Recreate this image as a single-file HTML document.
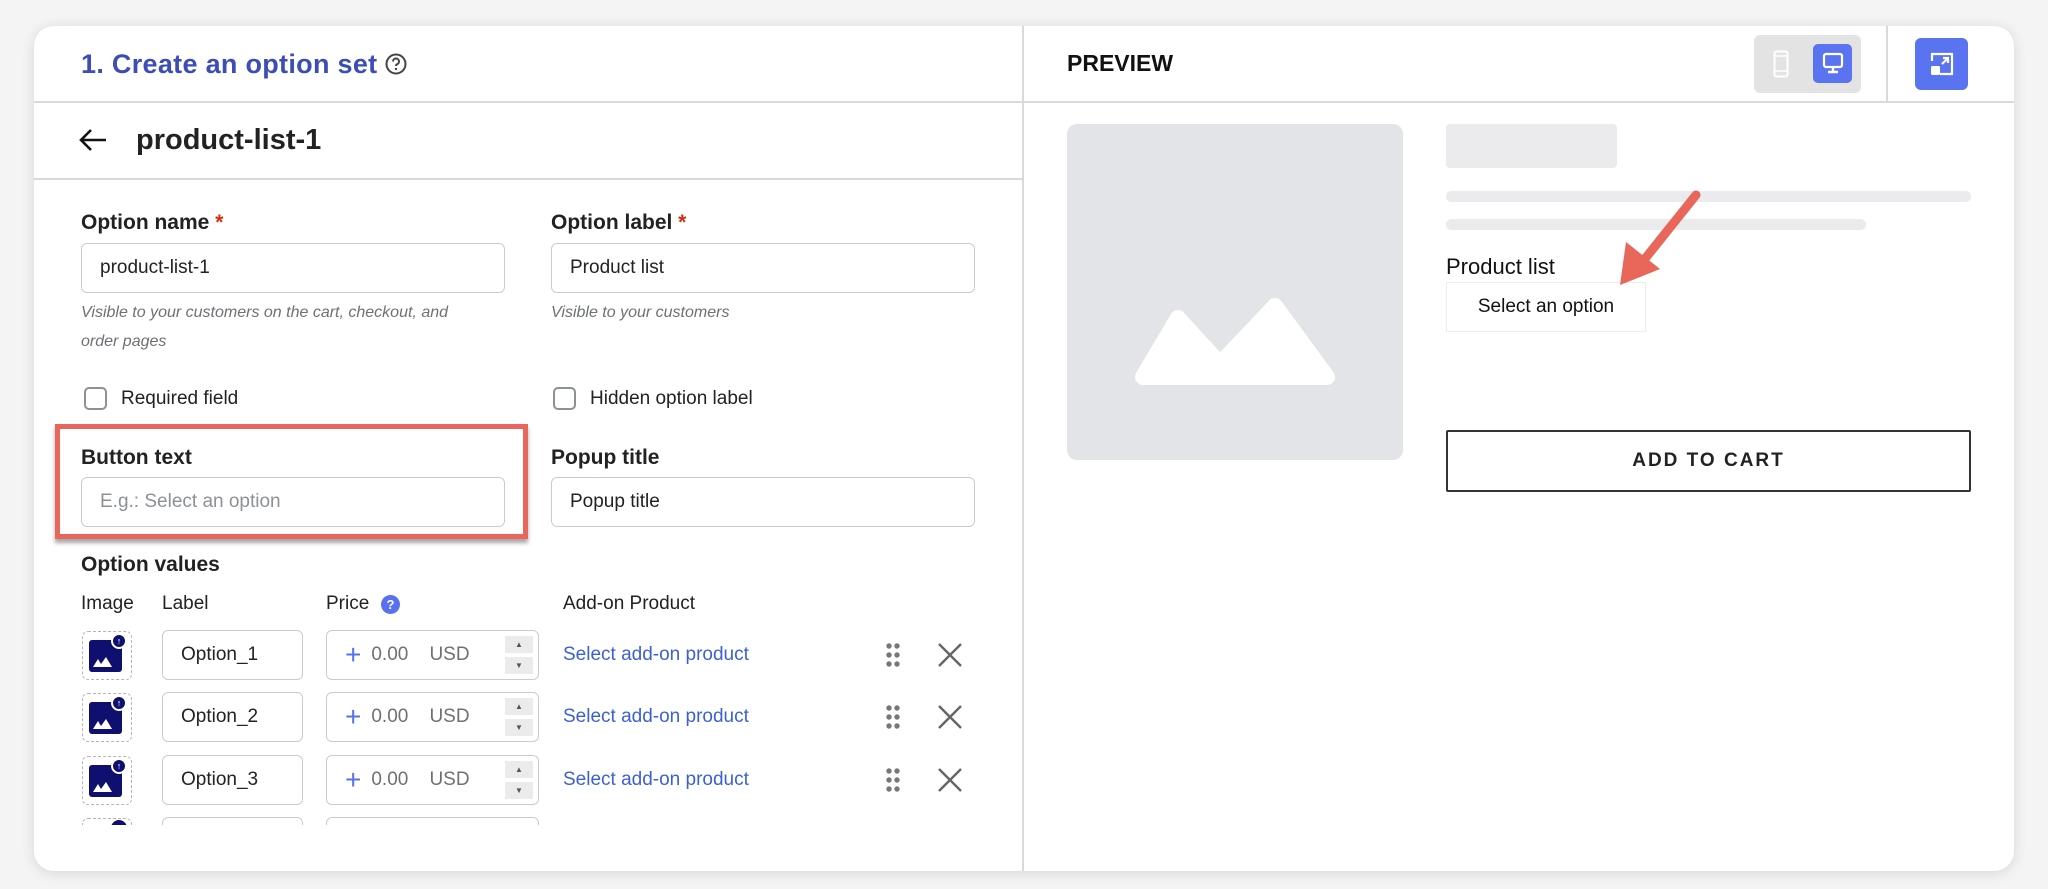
<!DOCTYPE html>
<html><head><meta charset="utf-8"><style>
*{box-sizing:border-box;margin:0;padding:0}
body{width:2048px;height:889px;background:#f4f4f5;font-family:"Liberation Sans",sans-serif;color:#202223;position:relative;overflow:hidden}
.a{position:absolute}
.card{left:34px;top:26px;width:1980px;height:845px;background:#fff;border-radius:20px;box-shadow:0 2px 14px rgba(0,0,0,.12);overflow:hidden}
.lbl{font-size:21px;font-weight:bold;color:#202223}
.inp{border:1.5px solid #c9cccf;border-radius:6px;background:#fff;font-size:19px;color:#202223;padding-left:18px;display:flex;align-items:center}
.help{font-size:16px;font-style:italic;color:#6d7175}
.cb{width:23px;height:23px;border:2px solid #8c9196;border-radius:5px}
.link{color:#3c5fd6;font-size:19px}
.star{color:#d72c0d}
</style></head><body>
<div class="a card"></div>
<div class="a" style="left:34px;top:101px;width:1980px;height:2px;background:#d9d9d9"></div>
<div class="a" style="left:34px;top:178px;width:989px;height:2px;background:#d9d9d9"></div>
<div class="a" style="left:1022px;top:26px;width:2px;height:845px;background:#d9d9d9"></div>
<div class="a" style="left:81px;top:49px;font-size:27px;font-weight:bold;color:#3d4db7;letter-spacing:0.3px">1. Create an option set</div>
<svg class="a" style="left:384px;top:52px" width="24" height="24" viewBox="0 0 24 24"><circle cx="12" cy="12" r="9.5" fill="none" stroke="#444" stroke-width="2"/><path d="M9 9.5a3 3 0 1 1 4 2.8c-.8.4-1 .9-1 1.7" fill="none" stroke="#444" stroke-width="2"/><circle cx="12" cy="17" r="1.2" fill="#444"/></svg>
<svg class="a" style="left:78px;top:127px" width="30" height="26" viewBox="0 0 30 26"><path d="M28 13H3M13 3L3 13l10 10" fill="none" stroke="#111" stroke-width="2.6"/></svg>
<div class="a" style="left:136px;top:124px;font-size:29px;font-weight:bold;color:#202223">product-list-1</div>

<div class="a lbl" style="left:81px;top:211px">Option name <span class="star">*</span></div>
<div class="a inp" style="left:81px;top:243px;width:424px;height:50px">product-list-1</div>
<div class="a help" style="left:81px;top:304px">Visible to your customers on the cart, checkout, and</div>
<div class="a help" style="left:81px;top:333px">order pages</div>
<div class="a lbl" style="left:551px;top:211px">Option label <span class="star">*</span></div>
<div class="a inp" style="left:551px;top:243px;width:424px;height:50px">Product list</div>
<div class="a help" style="left:551px;top:304px">Visible to your customers</div>

<div class="a cb" style="left:84px;top:387px"></div>
<div class="a" style="left:121px;top:388px;font-size:19px">Required field</div>
<div class="a cb" style="left:553px;top:387px"></div>
<div class="a" style="left:590px;top:388px;font-size:19px">Hidden option label</div>

<div class="a" style="left:55px;top:424px;width:473px;height:115px;border:5px solid #e8665a;box-shadow:0 4px 4px rgba(0,0,0,.35)"></div>
<div class="a lbl" style="left:81px;top:446px">Button text</div>
<div class="a inp" style="left:81px;top:477px;width:424px;height:50px;color:#8c9196">E.g.: Select an option</div>
<div class="a lbl" style="left:551px;top:446px">Popup title</div>
<div class="a inp" style="left:551px;top:477px;width:424px;height:50px">Popup title</div>

<div class="a lbl" style="left:81px;top:553px">Option values</div>
<div class="a" style="left:81px;top:593px;font-size:19px">Image</div>
<div class="a" style="left:162px;top:593px;font-size:19px">Label</div>
<div class="a" style="left:326px;top:593px;font-size:19px">Price</div>
<div class="a" style="left:381px;top:595px;width:19px;height:19px;border-radius:50%;background:#5871ee;color:#fff;font-size:13px;text-align:center;line-height:19px;font-weight:bold">?</div>
<div class="a" style="left:563px;top:593px;font-size:19px">Add-on Product</div>

<div class="a" style="left:34px;top:620px;width:989px;height:205px;overflow:hidden">
 <div class="a" style="left:48px;top:11px;width:50px;height:49px;border:1.5px dashed #b5b5b5;border-radius:6px"></div>
 <div class="a" style="left:55px;top:20px;width:33px;height:32px;background:#0f0f70;border-radius:3px"></div>
 <svg class="a" style="left:57px;top:36px" width="28" height="12" viewBox="0 0 28 12"><path d="M2 11l5-8 3 5 5-7 6 10z" fill="#fff"/></svg>
 <div class="a" style="left:77px;top:13px;width:16px;height:16px;border-radius:50%;background:#0f0f70;border:2px solid #fff;color:#fff;font-size:9px;text-align:center;line-height:12px">↑</div>
 <div class="a inp" style="left:128px;top:10px;width:141px;height:50px">Option_1</div>
 <div class="a inp" style="left:292px;top:10px;width:213px;height:50px;color:#6d7175"><span style="color:#5871ee;font-size:28px;margin-right:10px">+</span>0.00&nbsp;&nbsp;&nbsp;&nbsp;USD</div>
 <div class="a" style="left:471px;top:16px;width:28px;height:17px;background:#ebebeb;font-size:8px;text-align:center;line-height:17px;color:#555">▲</div>
 <div class="a" style="left:471px;top:37px;width:28px;height:17px;background:#ebebeb;font-size:8px;text-align:center;line-height:17px;color:#555">▼</div>
 <div class="a link" style="left:529px;top:24px">Select add-on product</div>
 <svg class="a" style="left:851px;top:22px" width="16" height="26"><g fill="#777"><circle cx="4" cy="4" r="2.7"/><circle cx="12" cy="4" r="2.7"/><circle cx="4" cy="13" r="2.7"/><circle cx="12" cy="13" r="2.7"/><circle cx="4" cy="22" r="2.7"/><circle cx="12" cy="22" r="2.7"/></g></svg>
 <svg class="a" style="left:903px;top:22px" width="26" height="26"><path d="M2 2l22 22M24 2L2 24" stroke="#666" stroke-width="2.4"/></svg>

 <div class="a" style="left:48px;top:73px;width:50px;height:49px;border:1.5px dashed #b5b5b5;border-radius:6px"></div>
 <div class="a" style="left:55px;top:82px;width:33px;height:32px;background:#0f0f70;border-radius:3px"></div>
 <svg class="a" style="left:57px;top:98px" width="28" height="12" viewBox="0 0 28 12"><path d="M2 11l5-8 3 5 5-7 6 10z" fill="#fff"/></svg>
 <div class="a" style="left:77px;top:75px;width:16px;height:16px;border-radius:50%;background:#0f0f70;border:2px solid #fff;color:#fff;font-size:9px;text-align:center;line-height:12px">↑</div>
 <div class="a inp" style="left:128px;top:72px;width:141px;height:50px">Option_2</div>
 <div class="a inp" style="left:292px;top:72px;width:213px;height:50px;color:#6d7175"><span style="color:#5871ee;font-size:28px;margin-right:10px">+</span>0.00&nbsp;&nbsp;&nbsp;&nbsp;USD</div>
 <div class="a" style="left:471px;top:78px;width:28px;height:17px;background:#ebebeb;font-size:8px;text-align:center;line-height:17px;color:#555">▲</div>
 <div class="a" style="left:471px;top:99px;width:28px;height:17px;background:#ebebeb;font-size:8px;text-align:center;line-height:17px;color:#555">▼</div>
 <div class="a link" style="left:529px;top:86px">Select add-on product</div>
 <svg class="a" style="left:851px;top:84px" width="16" height="26"><g fill="#777"><circle cx="4" cy="4" r="2.7"/><circle cx="12" cy="4" r="2.7"/><circle cx="4" cy="13" r="2.7"/><circle cx="12" cy="13" r="2.7"/><circle cx="4" cy="22" r="2.7"/><circle cx="12" cy="22" r="2.7"/></g></svg>
 <svg class="a" style="left:903px;top:84px" width="26" height="26"><path d="M2 2l22 22M24 2L2 24" stroke="#666" stroke-width="2.4"/></svg>

 <div class="a" style="left:48px;top:136px;width:50px;height:49px;border:1.5px dashed #b5b5b5;border-radius:6px"></div>
 <div class="a" style="left:55px;top:145px;width:33px;height:32px;background:#0f0f70;border-radius:3px"></div>
 <svg class="a" style="left:57px;top:161px" width="28" height="12" viewBox="0 0 28 12"><path d="M2 11l5-8 3 5 5-7 6 10z" fill="#fff"/></svg>
 <div class="a" style="left:77px;top:138px;width:16px;height:16px;border-radius:50%;background:#0f0f70;border:2px solid #fff;color:#fff;font-size:9px;text-align:center;line-height:12px">↑</div>
 <div class="a inp" style="left:128px;top:135px;width:141px;height:50px">Option_3</div>
 <div class="a inp" style="left:292px;top:135px;width:213px;height:50px;color:#6d7175"><span style="color:#5871ee;font-size:28px;margin-right:10px">+</span>0.00&nbsp;&nbsp;&nbsp;&nbsp;USD</div>
 <div class="a" style="left:471px;top:141px;width:28px;height:17px;background:#ebebeb;font-size:8px;text-align:center;line-height:17px;color:#555">▲</div>
 <div class="a" style="left:471px;top:162px;width:28px;height:17px;background:#ebebeb;font-size:8px;text-align:center;line-height:17px;color:#555">▼</div>
 <div class="a link" style="left:529px;top:149px">Select add-on product</div>
 <svg class="a" style="left:851px;top:147px" width="16" height="26"><g fill="#777"><circle cx="4" cy="4" r="2.7"/><circle cx="12" cy="4" r="2.7"/><circle cx="4" cy="13" r="2.7"/><circle cx="12" cy="13" r="2.7"/><circle cx="4" cy="22" r="2.7"/><circle cx="12" cy="22" r="2.7"/></g></svg>
 <svg class="a" style="left:903px;top:147px" width="26" height="26"><path d="M2 2l22 22M24 2L2 24" stroke="#666" stroke-width="2.4"/></svg>

 <div class="a" style="left:48px;top:198px;width:50px;height:49px;border:1.5px dashed #b5b5b5;border-radius:6px"></div>
 <div class="a" style="left:77px;top:200px;width:16px;height:16px;border-radius:50%;background:#0f0f70"></div>
 <div class="a inp" style="left:128px;top:197px;width:141px;height:50px"></div>
 <div class="a inp" style="left:292px;top:197px;width:213px;height:50px"></div>
</div>

<div class="a" style="left:1067px;top:50px;font-size:23px;font-weight:bold;color:#111">PREVIEW</div>
<div class="a" style="left:1754px;top:35px;width:107px;height:58px;background:#e3e3e3;border-radius:6px"></div>
<svg class="a" style="left:1773px;top:50px" width="16" height="28"><rect x="1.5" y="1.5" width="13" height="25" rx="2" fill="none" stroke="#fff" stroke-width="2"/><line x1="1.5" y1="6" x2="14.5" y2="6" stroke="#fff" stroke-width="1.5"/><line x1="1.5" y1="21" x2="14.5" y2="21" stroke="#fff" stroke-width="1.5"/></svg>
<div class="a" style="left:1813px;top:44px;width:39px;height:39px;background:#5a73f0;border-radius:5px"></div>
<svg class="a" style="left:1821px;top:51px" width="24" height="24"><rect x="3" y="3" width="18" height="13" rx="2" fill="none" stroke="#fff" stroke-width="2.2"/><path d="M12 16v4M7 21h10" stroke="#fff" stroke-width="2.4"/></svg>
<div class="a" style="left:1886px;top:26px;width:2px;height:76px;background:#d9d9d9"></div>
<div class="a" style="left:1915px;top:38px;width:53px;height:52px;background:#5a73f0;border-radius:6px"></div>
<svg class="a" style="left:1929px;top:51px" width="26" height="26"><path d="M3 10V3h20v20h-12" fill="none" stroke="#fff" stroke-width="2.2"/><rect x="2" y="15" width="9" height="9" rx="1.5" fill="#fff"/><path d="M13 13l6-6M14 7h5v5" fill="none" stroke="#fff" stroke-width="2.2"/></svg>

<div class="a" style="left:1067px;top:124px;width:336px;height:336px;background:#e3e4e8;border-radius:10px"></div>
<svg class="a" style="left:1067px;top:124px" width="336" height="336" viewBox="1067 124 336 336"><path d="M1143 377 L1178 318 L1220 364 L1275 306 L1327 377 Z" fill="#fff" stroke="#fff" stroke-width="16" stroke-linejoin="round"/></svg>
<div class="a" style="left:1446px;top:124px;width:171px;height:44px;background:#ebebee;border-radius:4px"></div>
<div class="a" style="left:1446px;top:191px;width:525px;height:11px;background:#ebebee;border-radius:5px"></div>
<div class="a" style="left:1446px;top:219px;width:420px;height:11px;background:#ebebee;border-radius:5px"></div>
<div class="a" style="left:1446px;top:254px;font-size:22px;color:#111">Product list</div>
<div class="a" style="left:1446px;top:282px;width:200px;height:50px;border:1px solid #ececec;font-size:19px;color:#111;display:flex;align-items:center;justify-content:center">Select an option</div>
<div class="a" style="left:1446px;top:430px;width:525px;height:62px;border:2px solid #333;border-radius:2px;font-size:19px;font-weight:bold;letter-spacing:2px;color:#222;display:flex;align-items:center;justify-content:center">ADD TO CART</div>
<svg class="a" style="left:1600px;top:185px" width="110" height="110"><path d="M96 10 L40 80" stroke="#e8665a" stroke-width="9" stroke-linecap="round"/><path d="M20 100 L26 57 L60 84 Z" fill="#e8665a"/></svg>
</body></html>
